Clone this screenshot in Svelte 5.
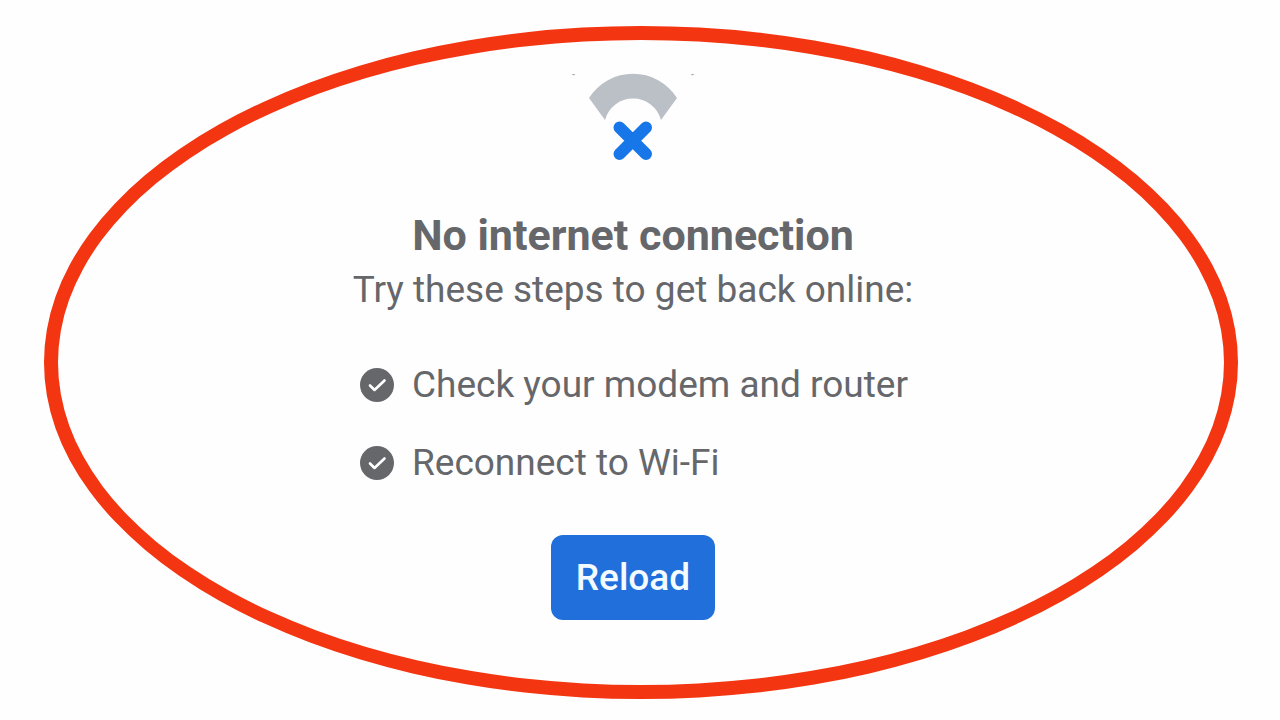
<!--
	Offline notice: status icon, message, a short checklist and a reload
	button, all circled by a thick oval outline.
-->
<script lang="ts">
	const steps: string[] = ['Check your modem and router', 'Reconnect to Wi-Fi'];

	function reload() {
		location.reload();
	}
</script>

<main class="page">
	<section class="oval">
		<svg class="wifi" viewBox="0 0 124 88" width="124" height="88" aria-hidden="true">
			<path d="M18 25A52 52 0 0 1 106 25L90 47A29 29 0 0 0 34 47Z" fill="#bbc0c6" />
			<path d="M0.5 1h4l-2 1.5zM119.500 1h4l-2 1.5z" fill="#a9adb2" />
			<path
				d="M48.5 54.5L75 81M75 54.5L48.5 81"
				stroke="#1877e8"
				stroke-width="12"
				stroke-linecap="round"
			/>
		</svg>

		<h1>No internet connection</h1>
		<p class="lead">Try these steps to get back online:</p>

		<ul class="steps">
			{#each steps as step}
				<li>
					<svg viewBox="0 0 34 34" width="34" height="34" aria-hidden="true">
						<circle cx="17" cy="17" r="17" fill="#65676b" />
						<path
							d="M10 17.5L14.500 22L24.5 12.5"
							fill="none"
							stroke="#fff"
							stroke-width="2.6"
							stroke-linecap="round"
							stroke-linejoin="round"
						/>
					</svg>
					<span>{step}</span>
				</li>
			{/each}
		</ul>

		<button type="button" class="reload" onclick={reload}>Reload</button>
	</section>
</main>

<style>
	:global(body) {
		background: #fefefe;
	}

	.page {
		padding: 26px 42px 20px 44px;
		font-family: Roboto, sans-serif;
		color: #65676b;
	}

	.oval {
		display: flex;
		flex-direction: column;
		align-items: center;
		padding: 33px 16px 65px 0;
		border: 14px solid #f33511;
		border-radius: 50%;
	}

	h1 {
		margin: 48px 0 0;
		font-size: 43px;
		font-weight: 700;
		line-height: 52px;
	}

	.lead {
		margin: 3px 0 0;
		font-size: 37px;
		line-height: 52px;
	}

	.steps {
		display: flex;
		flex-direction: column;
		gap: 26px;
		margin: 43px 0 0;
		padding: 0 0 0 2px;
		list-style: none;
		font-size: 37px;
		line-height: 52px;
	}

	.steps li {
		display: flex;
		align-items: center;
		gap: 18px;
	}

	.steps svg {
		flex: none;
	}

	.reload {
		width: 164px;
		height: 85px;
		margin-top: 46px;
		padding: 0;
		border: 0;
		border-radius: 12px;
		background: #216fdb;
		color: #f4fbff;
		font-family: inherit;
		font-size: 37px;
		font-weight: 500;
		cursor: pointer;
	}
</style>
